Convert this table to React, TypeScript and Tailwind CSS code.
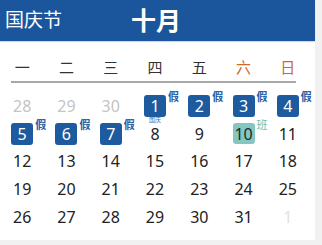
const weekdays = [
  { label: "一", weekend: false },
  { label: "二", weekend: false },
  { label: "三", weekend: false },
  { label: "四", weekend: false },
  { label: "五", weekend: false },
  { label: "六", weekend: true },
  { label: "日", weekend: true },
];

type Day = {
  n: number;
  kind?: "prev" | "next" | "holiday" | "work";
  note?: string;
};

const days: Day[] = [
  { n: 28, kind: "prev" },
  { n: 29, kind: "prev" },
  { n: 30, kind: "prev" },
  { n: 1, kind: "holiday", note: "国庆" },
  { n: 2, kind: "holiday" },
  { n: 3, kind: "holiday" },
  { n: 4, kind: "holiday" },
  { n: 5, kind: "holiday" },
  { n: 6, kind: "holiday" },
  { n: 7, kind: "holiday" },
  { n: 8 },
  { n: 9 },
  { n: 10, kind: "work" },
  { n: 11 },
  ...Array.from({ length: 20 }, (_, i) => ({ n: 12 + i })),
  { n: 1, kind: "next" },
];

const DayCell = ({ day }: { day: Day }) => {
  if (day.kind === "holiday") {
    return (
      <div className="relative flex h-[22px] w-[22px] items-center justify-center rounded-[3px] bg-[#1d5a9e] text-white">
        {day.n}
        <span className="absolute left-[24px] top-[-4px] text-[11px] font-bold leading-none text-[#2b5ea6]">假</span>
        {day.note && (
          <span className="absolute left-1/2 top-[22px] -translate-x-1/2 whitespace-nowrap text-[6px] leading-none text-[#3a6cb0]">
            {day.note}
          </span>
        )}
      </div>
    );
  }
  if (day.kind === "work") {
    return (
      <div className="relative flex h-[21px] w-[22px] items-center justify-center rounded-[3px] bg-[#86c6bf] text-[#1b2b2b]">
        {day.n}
        <span className="absolute left-[24px] top-[-4px] text-[11px] leading-none text-[#6bbdb3]">班</span>
      </div>
    );
  }
  const color =
    day.kind === "prev" ? "text-[#c4c4c4]" : day.kind === "next" ? "text-[#e2e2e2]" : "text-[#222]";
  return <span className={color}>{day.n}</span>;
};

export default function App() {
  return (
    <div
      className="h-[245px] w-[322px] overflow-hidden bg-[#f1f1f1]"
      style={{ fontFamily: '"Noto Sans", "Noto Sans CJK SC", sans-serif' }}
    >
      <div className="h-[240px] w-[315px] bg-white">
        {/* header */}
        <div className="flex h-[41px] items-center bg-[#1b569c] text-white shadow-[0_1px_1px_rgba(0,0,0,0.15)]">
          <span className="pl-[5px] text-[19px] leading-none">国庆节</span>
          <span className="ml-[69px] text-[25px] font-bold leading-none">十月</span>
        </div>

        {/* weekdays */}
        <div className="mt-[12px] grid h-[28px] w-[310px] grid-cols-7 items-center text-[15px]">
          {weekdays.map((w) => (
            <span
              key={w.label}
              className={`text-center ${w.weekend ? "text-[#cf6a2c]" : "text-[#333]"}`}
            >
              {w.label}
            </span>
          ))}
        </div>
        <div className="ml-[11px] h-[2px] w-[285px] bg-[#a8a8a8]" />

        {/* days */}
        <div className="mt-[9px] grid w-[310px] grid-cols-7 auto-rows-[27.75px] text-[16px]">
          {days.map((d, i) => (
            <div key={i} className="flex items-center justify-center">
              <DayCell day={d} />
            </div>
          ))}
        </div>
      </div>
    </div>
  );
}
